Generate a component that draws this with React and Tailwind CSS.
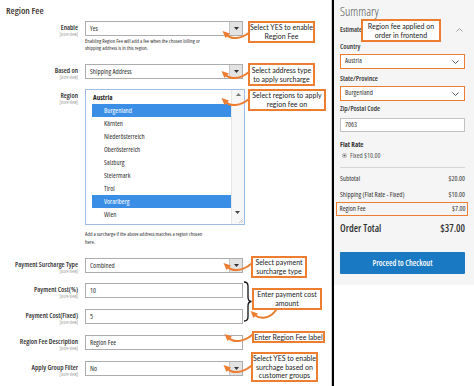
import React from "react";

function Label({ children }) {
  return (
    <div className="w-[78px] shrink-0 pt-[2px] text-right">
      <div className="text-[7px] font-semibold leading-[9px] text-[#303030]">{children}</div>
      <div className="text-[4.5px] leading-[5px] text-[#9a9a9a]">[store view]</div>
    </div>
  );
}

function Caret() {
  return (
    <svg width="5" height="3" viewBox="0 0 5 3">
      <polygon points="0,0 5,0 2.5,3" fill="#333" />
    </svg>
  );
}

function Select({ value }) {
  return (
    <div className="flex h-[15px] w-[158px] border border-[#adadad] bg-white">
      <div className="flex-1 pl-[4px] text-[7px] leading-[13px] text-[#303030]">{value}</div>
      <div className="flex w-[13px] items-center justify-center border-l border-[#c4c4c4] bg-[#e3e3e3]">
        <Caret />
      </div>
    </div>
  );
}

function Input({ value }) {
  return (
    <div className="h-[15px] w-[158px] border border-[#adadad] bg-white pl-[4px] text-[7px] leading-[13px] text-[#303030]">
      {value}
    </div>
  );
}

function Row({ label, className, children }) {
  return (
    <div className={"flex items-start " + className}>
      <Label>{label}</Label>
      <div className="ml-[7px] w-[160px]">{children}</div>
    </div>
  );
}

function Callout({ className, children }) {
  return (
    <div
      className={
        "absolute flex flex-col items-center justify-center whitespace-nowrap border-2 border-[#ed7d31] bg-white text-center font-['Lato',sans-serif] text-[7px] text-[#222] [font-stretch:normal] " +
        className
      }
    >
      {children}
    </div>
  );
}

function Arrow({ className }) {
  return (
    <svg className={"absolute " + className} width="30" height="14" viewBox="0 0 30 14">
      <path d="M6 8 C 10 12.5, 20 12.5, 29 5" fill="none" stroke="#ed7d31" strokeWidth="2" strokeLinecap="round" />
      <polygon points="1.5,4 9,6.5 4.5,11" fill="#ed7d31" />
    </svg>
  );
}

function ArrowUp({ className }) {
  return (
    <svg className={"absolute " + className} width="30" height="14" viewBox="0 0 30 14">
      <path d="M6 8 C 11 12.5, 21 12, 27 3" fill="none" stroke="#ed7d31" strokeWidth="2" strokeLinecap="round" />
      <polygon points="1.5,4 9,6.5 4.5,11" fill="#ed7d31" />
    </svg>
  );
}

function Chev({ up }) {
  return (
    <svg width="7" height="4" viewBox="0 0 7 4">
      <polyline
        points={up ? "0.5,3.5 3.5,0.5 6.5,3.5" : "0.5,0.5 3.5,3.5 6.5,0.5"}
        fill="none"
        stroke={up ? "#999" : "#444"}
        strokeWidth="0.9"
      />
    </svg>
  );
}

const regions = [
  "Burgenland",
  "Kärnten",
  "Niederösterreich",
  "Oberösterreich",
  "Salzburg",
  "Steiermark",
  "Tirol",
  "Vorarlberg",
  "Wien",
];

export default function App() {
  return (
    <div className="flex h-[386px] w-[474px] overflow-hidden bg-white font-['Open_Sans',sans-serif] text-[#303030] [font-stretch:87.5%]">
      {/* Left admin panel */}
      <div className="relative w-[331px] shrink-0 pt-[5px]">
        <div className="pl-[6px] text-[9.5px] font-semibold leading-[12px] text-[#41362f]">Region Fee</div>

        <Row label="Enable" className="mt-[4px]">
          <Select value="Yes" />
          <div className="mt-[2px] text-[5.5px] leading-[7px] text-[#303030]">
            Enabling Region Fee will add a fee when the chosen billing or
            <br />
            shipping address is in this region.
          </div>
        </Row>

        <Row label="Based on" className="mt-[12px]">
          <Select value="Shipping Address" />
        </Row>

        <Row label="Region" className="mt-[9px]">
          <div className="flex h-[136px] w-[160px] border border-[#9dbde3] bg-white">
            <div className="flex-1 pt-[2px] pl-[6px]">
              <div className="pl-[1px] text-[7px] font-bold leading-[12px] text-[#222]">Austria</div>
              {regions.map((r) => {
                const sel = r === "Burgenland" || r === "Vorarlberg";
                return (
                  <div
                    key={r}
                    className={
                      sel
                        ? "h-[13px] bg-[#3b8ee6] pl-[12px] text-[7px] leading-[13px] text-white"
                        : "h-[13px] pl-[12px] text-[7px] leading-[13px] text-[#303030]"
                    }
                  >
                    {r}
                  </div>
                );
              })}
            </div>
            <div className="flex w-[13px] flex-col items-center justify-between border-l border-[#e6e6e6] bg-[#f7f7f7] pt-[3px] pb-[1px]">
              <svg width="5" height="3" viewBox="0 0 5 3">
                <polygon points="0,3 5,3 2.5,0" fill="#777" />
              </svg>
              <div className="flex flex-col items-end self-stretch pr-[1px]">
                <div className="mr-[3px]">
                  <svg width="5" height="3" viewBox="0 0 5 3">
                    <polygon points="0,0 5,0 2.5,3" fill="#444" />
                  </svg>
                </div>
                <svg className="mt-[4px]" width="5" height="5" viewBox="0 0 5 5">
                  <line x1="1" y1="5" x2="5" y2="1" stroke="#aaa" strokeWidth="0.6" />
                  <line x1="3" y1="5" x2="5" y2="3" stroke="#aaa" strokeWidth="0.6" />
                </svg>
              </div>
            </div>
          </div>
          <div className="mt-[5px] text-[5.5px] leading-[8px] text-[#303030]">
            Add a surcharge if the above address matches a region chosen
            <br />
            here.
          </div>
        </Row>

        <Row label="Payment Surcharge Type" className="mt-[12px]">
          <Select value="Combined" />
        </Row>
        <Row label="Payment Cost(%)" className="mt-[9px]">
          <Input value="10" />
        </Row>
        <Row label="Payment Cost(Fixed)" className="mt-[10px]">
          <Input value="5" />
        </Row>
        <Row label="Region Fee Description" className="mt-[10px]">
          <Input value="Region Fee" />
        </Row>
        <Row label="Apply Group Filter" className="mt-[10px]">
          <Select value="No" />
        </Row>

        {/* brace */}
        <svg className="absolute left-[243px] top-[281px]" width="9" height="41" viewBox="0 0 9 41">
          <path
            d="M1 1 Q 5 1 5 5 L 5 16 Q 5 20.5 8.5 20.5 Q 5 20.5 5 25 L 5 36 Q 5 40 1 40"
            fill="none"
            stroke="#111"
            strokeWidth="1.3"
          />
        </svg>

        <Arrow className="left-[221px] top-[27px]" />
        <Arrow className="left-[220px] top-[67px]" />
        <Arrow className="left-[220px] top-[94px]" />
        <Arrow className="left-[222px] top-[259px]" />
        <ArrowUp className="left-[249px] top-[307px]" />
        <Arrow className="left-[223px] top-[330px]" />
        <Arrow className="left-[222px] top-[361px]" />

        <Callout className="left-[248px] top-[21px] h-[22px] w-[67px] leading-[9px]">
          <span>Select YES to enable</span>
          <span>Region Fee</span>
        </Callout>
        <Callout className="left-[248px] top-[63px] h-[23px] w-[67px] leading-[9px]">
          <span>Select address type</span>
          <span>to apply surcharge</span>
        </Callout>
        <Callout className="left-[248px] top-[89px] h-[22px] w-[78px] leading-[9px]">
          <span>Select regions to apply</span>
          <span>region fee on</span>
        </Callout>
        <Callout className="left-[251px] top-[256px] h-[22px] w-[56px] leading-[9px]">
          <span>Select payment</span>
          <span>surcharge type</span>
        </Callout>
        <Callout className="left-[252px] top-[288px] h-[22px] w-[70px] leading-[9px]">
          <span>Enter payment cost</span>
          <span>amount</span>
        </Callout>
        <Callout className="left-[252px] top-[331px] h-[12px] w-[73px] leading-[8px]">
          <span>Enter Region Fee label</span>
        </Callout>
        <Callout className="left-[251px] top-[352px] h-[30px] w-[67px] leading-[8.5px]">
          <span>Select YES to enable</span>
          <span>surchage based on</span>
          <span>customer groups</span>
        </Callout>
      </div>

      {/* divider */}
      <div className="w-px shrink-0 bg-[#cfcfcf]" />
      <div className="w-[2px] shrink-0 bg-black" />

      {/* Right summary panel */}
      <div className="relative flex-1">
        <div className="bg-[#f5f5f5] pt-[4px] pr-[9px] pb-[11px] pl-[6px] text-[7px] text-[#333]">
          <div className="text-[12.5px] font-light leading-[16px] text-[#575757]">Summary</div>
          <div className="mt-[5px] flex h-[10px] items-center justify-between pr-[2px]">
            <span className="font-semibold">Estimate Shipping and Tax</span>
            <Chev up />
          </div>
          <div className="mt-[7px] font-semibold leading-[9px]">Country</div>
          <div className="mt-[3px] flex h-[15px] items-center justify-between border-[1.5px] border-[#ed7d31] bg-white pr-[5px] pl-[4px]">
            <span>Austria</span>
            <Chev />
          </div>
          <div className="mt-[5px] font-semibold leading-[9px]">State/Province</div>
          <div className="mt-[3px] flex h-[15px] items-center justify-between border-[1.5px] border-[#ed7d31] bg-white pr-[5px] pl-[4px]">
            <span>Burgenland</span>
            <Chev />
          </div>
          <div className="mt-[3px] font-semibold leading-[9px]">Zip/Postal Code</div>
          <div className="mt-[5px] h-[14px] border border-[#c2c2c2] bg-white pl-[4px] leading-[12px]">7063</div>
          <div className="mt-[8px] font-bold leading-[9px]">Flat Rate</div>
          <div className="mt-[2px] flex items-center gap-[3px] pl-[2px] leading-[9px] text-[#555]">
            <svg width="5" height="5" viewBox="0 0 6 6">
              <circle cx="3" cy="3" r="2.6" fill="#fff" stroke="#777" strokeWidth="0.6" />
              <circle cx="3" cy="3" r="1.3" fill="#555" />
            </svg>
            <span>Fixed $10.00</span>
          </div>
          <div className="mt-[7px] border-t border-[#d6d6d6]" />
          <div className="mt-[6px] flex justify-between leading-[9px]">
            <span>Subtotal</span>
            <span>$20.00</span>
          </div>
          <div className="mt-[7px] flex justify-between leading-[9px]">
            <span>Shipping (Flat Rate - Fixed)</span>
            <span>$10.00</span>
          </div>
          <div className="mt-[3px] -mr-[3px] -ml-[4px] flex h-[14px] items-center justify-between border-[1.5px] border-[#ed7d31] pr-[1.5px] pl-[2.5px]">
            <span>Region Fee</span>
            <span>$7.00</span>
          </div>
          <div className="mt-[6px] flex justify-between text-[10px] font-semibold leading-[13px] text-[#333]">
            <span>Order Total</span>
            <span>$37.00</span>
          </div>
          <div className="mt-[17px] flex h-[22px] items-center justify-center rounded-[1px] bg-[#1979c3] text-[8px] font-semibold text-white">
            Proceed to Checkout
          </div>
        </div>

        <Callout className="left-[27px] top-[19px] h-[23px] w-[80px] leading-[9px]">
          <span>Region fee applied on</span>
          <span>order in frontend</span>
        </Callout>
      </div>
    </div>
  );
}
